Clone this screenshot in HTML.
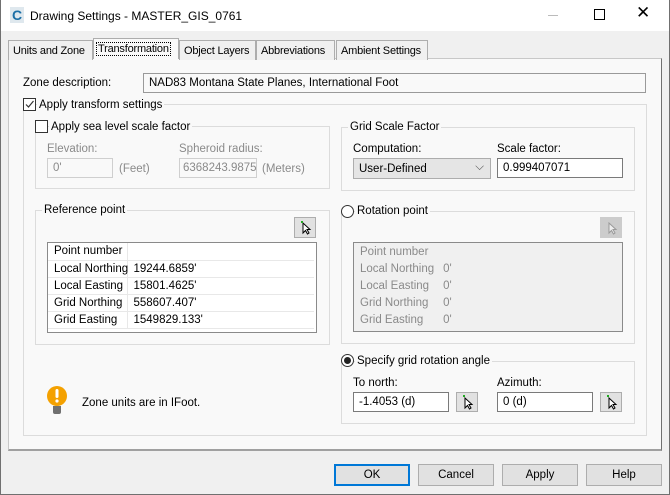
<!DOCTYPE html>
<html><head><style>
*{box-sizing:border-box;margin:0;padding:0}
body{width:670px;height:495px;overflow:hidden;background:#f0f0f0;font-family:"Liberation Sans",sans-serif;font-size:11.5px;color:#000;position:relative}
.a{position:absolute;white-space:nowrap}
.win{position:absolute;left:0;top:0;width:670px;height:495px;border:1px solid #707070;border-top:none}
.title{position:absolute;left:0;top:0;width:670px;height:31px;background:#fff}
.tab{position:absolute;top:39px;height:20px;border:1px solid #adadad;border-bottom:none;background:#f0f0f0;padding:4px 0 0 4px;font-size:11px;white-space:nowrap;overflow:hidden;letter-spacing:-0.2px}
.panel{position:absolute;left:8px;top:58px;width:654px;height:393px;background:#f9f9f9;border:1px solid #c8c8c8;border-right-color:#707070;border-bottom:2px solid #a0a0a0}
.grp{position:absolute;border:1px solid #dcdcdc}
.lg{position:absolute;background:#f9f9f9;padding:0 2px;white-space:nowrap}
.in{position:absolute;height:20px;border:1px solid #7a7a7a;background:#fff;padding:3px 5px 0;white-space:nowrap;overflow:hidden}
.dis{border-color:#cfcfcf;background:#f9f9f9;color:#8a8a8a}
.g{color:#8a8a8a}
.cb{position:absolute;width:13px;height:13px;border:1px solid #333;background:#fff}
.rb{position:absolute;width:13px;height:13px;border:1px solid #333;border-radius:50%;background:#fff}
.pk{position:absolute;width:22px;height:21px;background:#e1e1e1;border:1px solid #adadad}
.btn{position:absolute;top:464px;height:22px;width:76px;background:#e1e1e1;border:1px solid #adadad;text-align:center;line-height:20px}
table{border-collapse:collapse;table-layout:fixed}
td{height:17px;padding:0 6px;border-bottom:1px solid #e8e8e8;white-space:nowrap}
</style></head><body>
<div class="title"></div>
<div class="a" style="left:10px;top:7px;width:14px;height:16px;background:#dfe8ee;color:#1b6fa6;font-weight:bold;font-size:14px;line-height:16px;text-align:center">C</div>
<div class="a" style="left:30px;top:9px;font-size:12px">Drawing Settings - MASTER_GIS_0761</div>
<div class="a" style="left:548px;top:15px;width:10px;height:1px;background:#bbb"></div>
<div class="a" style="left:594px;top:9px;width:11px;height:11px;border:1px solid #000"></div>
<div class="a" style="left:636px;top:3px;font-size:17px">✕</div>
<div class="win"></div>

<div class="panel"></div>
<div class="tab" style="left:8px;width:85px;top:40px">Units and Zone</div>
<div class="tab" style="left:93px;width:86px;top:38px;height:21px;background:#f9f9f9;padding-left:3px"><span style="outline:1px dotted #000;padding:0 1px">Transformation</span></div>
<div class="tab" style="left:179px;width:77px;top:40px">Object Layers</div>
<div class="tab" style="left:256px;width:79px;top:40px">Abbreviations</div>
<div class="tab" style="left:336px;width:92px;top:40px">Ambient Settings</div>

<div class="a" style="left:23px;top:77px">Zone description:</div>
<div class="in" style="left:143px;top:73px;width:503px;background:#f9f9f9;border-color:#9a9a9a">NAD83 Montana State Planes, International Foot</div>

<div class="grp" style="left:23px;top:104px;width:624px;height:332px"></div>
<div class="cb" style="left:23px;top:98px"><svg width="11" height="11" style="position:absolute;left:0;top:0"><path d="M2 5.5 L4.5 8 L9.5 2" stroke="#333" fill="none" stroke-width="1.2"/></svg></div>
<div class="lg" style="left:37px;top:99px">Apply transform settings</div>

<div class="grp" style="left:35px;top:126px;width:295px;height:63px"></div>
<div class="cb" style="left:35px;top:120px"></div>
<div class="lg" style="left:49px;top:121px">Apply sea level scale factor</div>
<div class="a g" style="left:47px;top:143px">Elevation:</div>
<div class="in dis" style="left:47px;top:158px;width:66px">0'</div>
<div class="a g" style="left:119px;top:163px">(Feet)</div>
<div class="a g" style="left:179px;top:143px">Spheroid radius:</div>
<div class="in dis" style="left:179px;top:158px;width:78px;padding:3px 3px 0">6368243.9875</div>
<div class="a g" style="left:262px;top:163px">(Meters)</div>

<div class="grp" style="left:341px;top:127px;width:294px;height:64px"></div>
<div class="lg" style="left:348px;top:121px">Grid Scale Factor</div>
<div class="a" style="left:353px;top:143px">Computation:</div>
<div class="in" style="left:353px;top:158px;width:138px;height:21px;background:#e5e5e5;border-color:#adadad;padding-top:4px">User-Defined<span style="position:absolute;right:6px;top:2px;color:#555">⌵</span></div>
<div class="a" style="left:497px;top:143px">Scale factor:</div>
<div class="in" style="left:497px;top:158px;width:126px">0.999407071</div>

<div class="grp" style="left:35px;top:210px;width:295px;height:135px"></div>
<div class="lg" style="left:42px;top:204px">Reference point</div>
<div class="pk" style="left:294px;top:217px"><svg width="20" height="19"><path d="M8 5 L8 15 L10.5 12.5 L12.5 16 L14 15 L12 11.5 L15 11.5 Z" fill="#fff" stroke="#000"/><rect x="6" y="3" width="2" height="2" fill="#2a2"/></svg></div>
<div class="a" style="left:47px;top:242px;width:270px;height:91px;border:1px solid #8a8a8a;background:#fff">
<table style="width:266px"><col style="width:79px"><col><tr><td style="border-right:1px solid #e8e8e8">Point number</td><td></td></tr>
<tr><td style="border-right:1px solid #e8e8e8">Local Northing</td><td>19244.6859'</td></tr>
<tr><td style="border-right:1px solid #e8e8e8">Local Easting</td><td>15801.4625'</td></tr>
<tr><td style="border-right:1px solid #e8e8e8">Grid Northing</td><td>558607.407'</td></tr>
<tr><td style="border-right:1px solid #e8e8e8">Grid Easting</td><td>1549829.133'</td></tr></table></div>

<div class="grp" style="left:341px;top:211px;width:294px;height:133px"></div>
<div class="rb" style="left:341px;top:205px"></div>
<div class="lg" style="left:355px;top:205px">Rotation point</div>
<div class="pk" style="left:600px;top:217px;background:#ccc;border-color:#ccc"><svg width="20" height="19"><path d="M8 5 L8 15 L10.5 12.5 L12.5 16 L14 15 L12 11.5 L15 11.5 Z" fill="#eee" stroke="#999"/></svg></div>
<div class="a g" style="left:353px;top:242px;width:270px;height:90px;border:1px solid #8a8a8a;background:#f0f0f0">
<table><col style="width:80px"><col><tr><td style="border:none;padding:0 6px">Point number</td><td style="border:none"></td></tr>
<tr><td style="border:none;padding:0 6px">Local Northing</td><td style="border:none;padding:0 3px">0'</td></tr>
<tr><td style="border:none;padding:0 6px">Local Easting</td><td style="border:none;padding:0 3px">0'</td></tr>
<tr><td style="border:none;padding:0 6px">Grid Northing</td><td style="border:none;padding:0 3px">0'</td></tr>
<tr><td style="border:none;padding:0 6px">Grid Easting</td><td style="border:none;padding:0 3px">0'</td></tr></table></div>

<div class="grp" style="left:341px;top:361px;width:294px;height:63px"></div>
<div class="rb" style="left:341px;top:354px"><div style="position:absolute;left:2px;top:2px;width:7px;height:7px;border-radius:50%;background:#222"></div></div>
<div class="lg" style="left:355px;top:355px">Specify grid rotation angle</div>
<div class="a" style="left:353px;top:377px">To north:</div>
<div class="in" style="left:353px;top:392px;width:96px">-1.4053 (d)</div>
<div class="pk" style="left:456px;top:392px;height:20px"><svg width="20" height="18"><path d="M8 5 L8 15 L10.5 12.5 L12.5 16 L14 15 L12 11.5 L15 11.5 Z" fill="#fff" stroke="#000"/><rect x="6" y="2" width="2" height="2" fill="#2a2"/></svg></div>
<div class="a" style="left:497px;top:377px">Azimuth:</div>
<div class="in" style="left:497px;top:392px;width:96px">0 (d)</div>
<div class="pk" style="left:600px;top:392px;height:20px"><svg width="20" height="18"><path d="M8 5 L8 15 L10.5 12.5 L12.5 16 L14 15 L12 11.5 L15 11.5 Z" fill="#fff" stroke="#000"/><rect x="6" y="2" width="2" height="2" fill="#2a2"/></svg></div>

<svg class="a" style="left:46px;top:386px" width="22" height="30"><circle cx="11" cy="10" r="10" fill="#f4a100"/><rect x="9.5" y="3" width="3" height="9" rx="1.5" fill="#fff"/><circle cx="11" cy="15" r="1.6" fill="#fff"/><path d="M7 20 H15 V26 Q15 28 13 28 H9 Q7 28 7 26 Z" fill="#707070"/></svg>
<div class="a" style="left:82px;top:397px">Zone units are in IFoot.</div>

<div class="btn" style="left:334px;border:2px solid #0078d7;line-height:18px">OK</div>
<div class="btn" style="left:418px">Cancel</div>
<div class="btn" style="left:502px">Apply</div>
<div class="btn" style="left:586px">Help</div>
</body></html>
